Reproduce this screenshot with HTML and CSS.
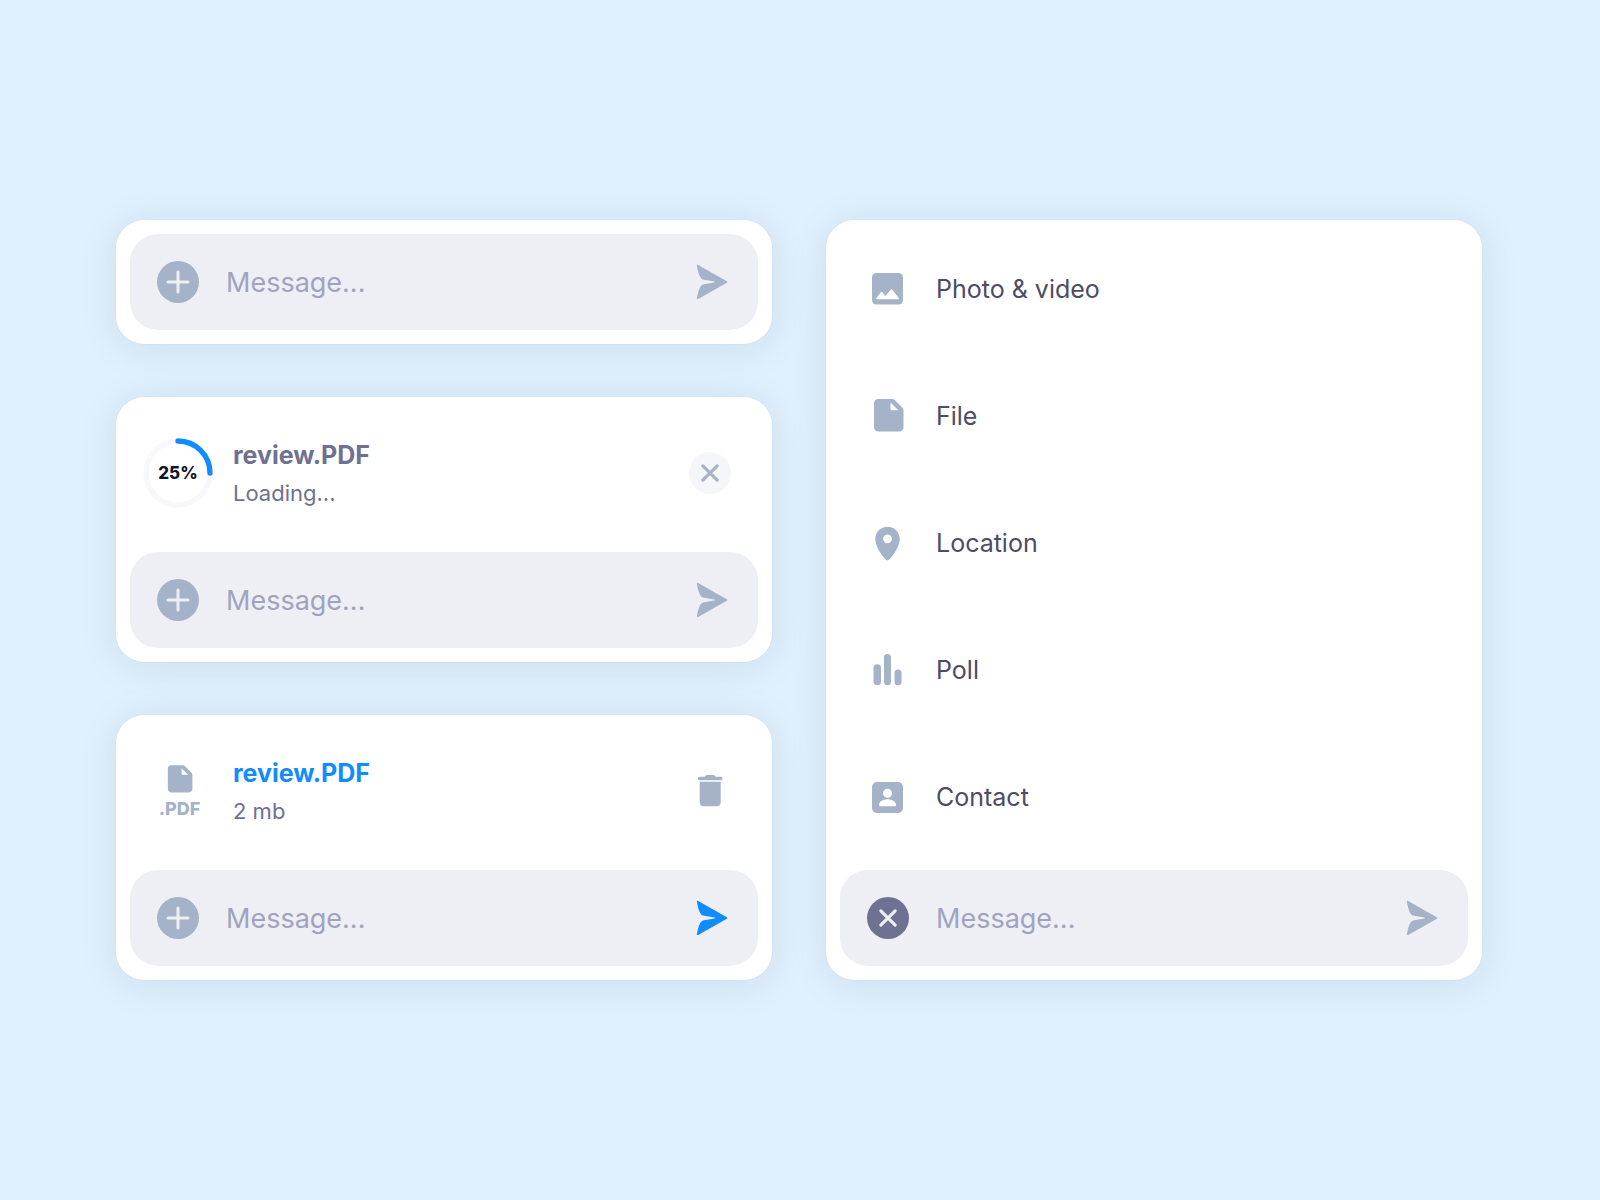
FILE: index.html
```html
<!DOCTYPE html>
<html lang="en">
<head>
<meta charset="utf-8">
<meta name="viewport" content="width=device-width, initial-scale=1">
<title>Message composer</title>
<link rel="stylesheet" href="styles.css">
</head>
<body>
<svg class="sprite" aria-hidden="true">
  <symbol id="plus" viewBox="0 0 42 42"><path d="M21 11v20M11 21h20" fill="none" stroke="currentColor" stroke-width="3" stroke-linecap="round"/></symbol>
  <symbol id="cross" viewBox="0 0 42 42"><path d="M13.800 13.800l14.400 14.400M28.200 13.800l-14.400 14.400" fill="none" stroke="currentColor" stroke-width="3.100" stroke-linecap="round"/></symbol>
  <symbol id="send" viewBox="0 0 42 42"><path transform="translate(1.200 0)" d="M6.700 4.900C6.500 4 7.200 3.600 8 4L36.600 20.200C37.400 20.700 37.400 21.300 36.600 21.800L8 38C7.200 38.400 6.500 38 6.700 37.100C7.600 32 8.600 28.600 10.300 25.600C11.200 24 12.300 23.500 14 23.200L24.200 21.400C25 21.200 25 20.800 24.200 20.600L14 18.800C12.300 18.500 11.200 18 10.300 16.400C8.600 13.400 7.600 10 6.700 4.900Z" fill="currentColor"/></symbol>
  <symbol id="file" viewBox="0 0 42 42"><path fill="currentColor" fill-rule="evenodd" d="M11.300 4H24.700C26 4 27 4.400 27.900 5.300L35.200 12.600C36 13.400 36.500 14.500 36.500 15.700V32.200C36.500 34.800 34.800 36.500 32.200 36.500H11.300C8.700 36.500 7 34.800 7 32.200V8.300C7 5.700 8.700 4 11.300 4ZM23.500 7.400V14Q23.500 15.200 24.700 15.200H31.300Z"/></symbol>
</svg>
<main class="board">
  <div class="column">
    <section class="card">
      <form class="composer">
        <button class="round" type="button" aria-label="Add attachment"><svg><use href="#plus"/></svg></button>
        <input class="field" type="text" placeholder="Message..." aria-label="Message">
        <button class="send" type="button" aria-label="Send"><svg><use href="#send"/></svg></button>
      </form>
    </section>

    <section class="card">
      <div class="attachment">
        <div class="thumb">
          <svg class="ring" viewBox="0 0 70 70" aria-hidden="true">
            <circle cx="35" cy="35" r="32" fill="none" stroke="#f7f7fc" stroke-width="5.300"/>
            <path d="M35 3A32 32 0 0 1 67 35" fill="none" stroke="#118cff" stroke-width="5.300" stroke-linecap="round"/>
          </svg>
          <span class="percent">25%</span>
        </div>
        <div class="details">
          <strong class="name">review.PDF</strong>
          <span class="status">Loading...</span>
        </div>
        <button class="round round-soft" type="button" aria-label="Cancel upload"><svg><use href="#cross"/></svg></button>
      </div>
      <form class="composer">
        <button class="round" type="button" aria-label="Add attachment"><svg><use href="#plus"/></svg></button>
        <input class="field" type="text" placeholder="Message..." aria-label="Message">
        <button class="send" type="button" aria-label="Send"><svg><use href="#send"/></svg></button>
      </form>
    </section>

    <section class="card">
      <div class="attachment">
        <div class="thumb thumb-file">
          <svg class="file-icon" aria-hidden="true"><use href="#file"/></svg>
          <span class="extension">.PDF</span>
        </div>
        <div class="details">
          <a class="name" href="#">review.PDF</a>
          <span class="status">2 mb</span>
        </div>
        <button class="round round-plain" type="button" aria-label="Delete file">
          <svg viewBox="0 0 42 42"><path fill="currentColor" d="M10.700 6.700H15.700C16.500 5.500 17.200 4.900 18.500 4.900H23.900C25.200 4.900 25.900 5.500 26.700 6.700H31.700Q33.600 6.700 33.600 8.500Q33.600 10.300 31.700 10.300H10.700Q8.800 10.300 8.800 8.500Q8.800 6.700 10.700 6.700ZM10.700 11.800H31.700V32Q31.700 36.200 27.500 36.200H14.900Q10.700 36.200 10.700 32Z"/></svg>
        </button>
      </div>
      <form class="composer">
        <button class="round" type="button" aria-label="Add attachment"><svg><use href="#plus"/></svg></button>
        <input class="field" type="text" placeholder="Message..." aria-label="Message">
        <button class="send send-ready" type="button" aria-label="Send"><svg><use href="#send"/></svg></button>
      </form>
    </section>
  </div>

  <section class="card card-menu">
    <nav class="menu" aria-label="Attach">
      <button class="option" type="button">
        <svg viewBox="0 0 42 42"><rect x="5" y="5" width="31" height="31.500" rx="4.500" fill="currentColor"/><path d="M9.800 31.200Q8.500 31.200 9.400 29.900L13.900 24.300Q14.700 23.500 15.500 24.300L18.200 27.900L23.700 21.700Q24.600 20.900 25.400 21.800L31.700 29.900Q32.500 31.200 31.200 31.200Z" fill="#fff"/></svg>
        Photo &amp; video
      </button>
      <button class="option" type="button"><svg><use href="#file"/></svg>File</button>
      <button class="option" type="button">
        <svg viewBox="0 0 42 42"><path fill="currentColor" fill-rule="evenodd" d="M20.500 4.700C27.400 4.700 32.700 9.900 32.700 16.700C32.700 24.200 26.500 33.100 22.300 37.500Q20.500 39.200 18.700 37.500C14.500 33.100 8.300 24.200 8.300 16.700C8.300 9.900 13.600 4.700 20.500 4.700ZM20.500 12.400A4.400 4.400 0 1 0 20.500 21.200A4.400 4.400 0 1 0 20.500 12.400Z"/></svg>
        Location
      </button>
      <button class="option" type="button">
        <svg viewBox="0 0 42 42"><g fill="currentColor"><rect x="6.500" y="15.300" width="7.500" height="21" rx="3.700"/><rect x="17" y="5" width="7" height="31.300" rx="3.500"/><rect x="27.500" y="20.500" width="7" height="15.800" rx="3.500"/></g></svg>
        Poll
      </button>
      <button class="option" type="button">
        <svg viewBox="0 0 42 42"><rect x="5" y="6" width="31" height="31" rx="5" fill="currentColor"/><circle cx="20.500" cy="17.300" r="4.500" fill="#fff"/><path d="M12 28.700C12 25.300 16.500 23.200 20.500 23.200S29 25.300 29 28.700Q29 30.200 27.500 30.200H13.500Q12 30.200 12 28.700Z" fill="#fff"/></svg>
        Contact
      </button>
    </nav>
    <form class="composer">
      <button class="round round-dark" type="button" aria-label="Close menu"><svg><use href="#cross"/></svg></button>
      <input class="field" type="text" placeholder="Message..." aria-label="Message">
      <button class="send" type="button" aria-label="Send"><svg><use href="#send"/></svg></button>
    </form>
  </section>
</main>
</body>
</html>
```
FILE: styles.css
```css
* {
  box-sizing: border-box;
}

body {
  margin: 0;
  min-height: 100vh;
  display: flex;
  align-items: center;
  background: #dff1ff;
  font-family: Inter, "Liberation Sans", sans-serif;
}

button,
input {
  margin: 0;
  padding: 0;
  border: 0;
  background: none;
  font: inherit;
}

button {
  cursor: pointer;
}

.sprite {
  position: absolute;
  width: 0;
  height: 0;
}

.board {
  flex: 1;
  display: grid;
  grid-template-columns: 1fr 1fr;
  gap: 54px;
  padding: 40px 118px 40px 116px;
}

.column {
  display: flex;
  flex-direction: column;
  gap: 53px;
}

.card {
  padding: 14px;
  border-radius: 28px;
  background: #fff;
  box-shadow: 0 0 2px rgba(0, 20, 20, 0.06), 0 4px 40px rgba(0, 20, 10, 0.09);
}

.card-menu {
  display: flex;
  flex-direction: column;
  justify-content: space-between;
}

.composer {
  display: flex;
  align-items: center;
  gap: 27px;
  height: 96px;
  padding: 0 27px;
  border-radius: 28px;
  background: #eeeff5;
}

.field {
  flex: 1;
  min-width: 0;
  height: 42px;
  padding-top: 1px;
  color: #4e4b66;
  font-size: 27px;
  outline: none;
}

.field::placeholder {
  color: #a0a3bd;
  opacity: 1;
}

.round,
.send {
  flex: none;
  width: 42px;
  height: 42px;
  border-radius: 50%;
  color: #a4b3c7;
}

.round svg,
.send svg {
  display: block;
  width: 42px;
  height: 42px;
}

.round {
  background: #a4b3c7;
  color: #eeeff5;
}

.round-soft {
  background: #f4f6f9;
  color: #a4b3c7;
}

.round-plain {
  background: none;
  color: #a4b3c7;
}

.round-dark {
  background: #6e7191;
}

.send-ready {
  color: #118cff;
}

.attachment {
  display: flex;
  align-items: center;
  gap: 20px;
  padding: 27px 27px 44px 13px;
}

.thumb {
  display: grid;
  place-items: center;
  width: 70px;
  height: 70px;
}

.ring,
.percent {
  grid-area: 1 / 1;
}

.ring {
  width: 70px;
  height: 70px;
}

.percent {
  color: #14142b;
  font-size: 17px;
  font-weight: 800;
}

.thumb-file {
  display: flex;
  flex-direction: column;
  align-items: center;
  justify-content: center;
  gap: 1px;
  padding-left: 3px;
}

.file-icon {
  width: 35px;
  height: 35px;
  color: #a4b3c7;
}

.extension {
  color: #a4b3c7;
  font-size: 18px;
  line-height: 22px;
  font-weight: 800;
}

.details {
  flex: 1;
  display: flex;
  flex-direction: column;
  gap: 6px;
}

.name {
  color: #6e7191;
  font-size: 25px;
  line-height: 34px;
  font-weight: 700;
  text-decoration: none;
}

a.name {
  color: #118cff;
}

.status {
  color: #6e7191;
  font-size: 22px;
  line-height: 30px;
}

.menu {
  display: flex;
  flex-direction: column;
  gap: 85px;
  padding: 34px 27px 0;
}

.option {
  display: flex;
  align-items: center;
  gap: 27px;
  height: 42px;
  color: #4e4b66;
  font-size: 25px;
  text-align: left;
}

.option svg {
  flex: none;
  width: 42px;
  height: 42px;
  color: #a4b3c7;
}
```
